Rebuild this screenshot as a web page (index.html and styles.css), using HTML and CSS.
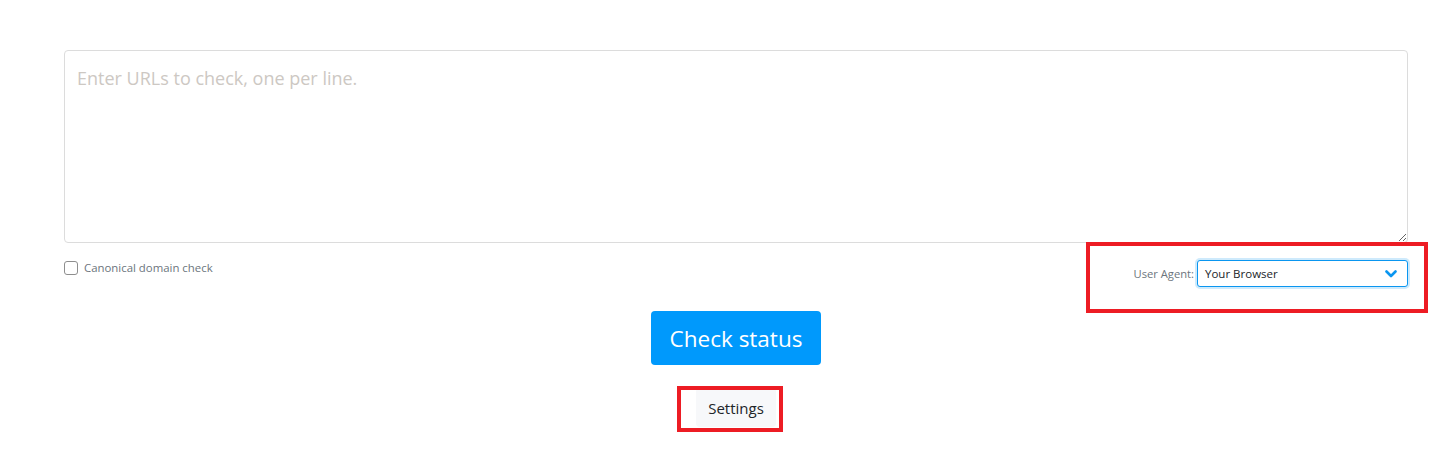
FILE: index.html
```html
<!DOCTYPE html>
<html lang="en">
<head>
<meta charset="utf-8">
<title>Check status</title>
<link rel="stylesheet" href="styles.css">
</head>
<body>
<main class="page">
  <textarea class="urls" placeholder="Enter URLs to check, one per line."></textarea>
  <div class="options">
    <label class="check">
      <input type="checkbox" class="check-box">
      <span class="check-label">Canonical domain check</span>
    </label>
    <div class="ua annotated annotated-ua">
      <span class="ua-label">User Agent:</span>
      <div class="select">
        <span class="select-value">Your Browser</span>
        <svg class="chevron" width="12" height="8" viewBox="0 0 12 8" aria-hidden="true">
          <path d="M1.5 1.5 L6 6 L10.5 1.5" fill="none" stroke="#0a96f0" stroke-width="2.6" stroke-linecap="round" stroke-linejoin="round"/>
        </svg>
      </div>
    </div>
  </div>
  <div class="actions">
    <button class="btn-primary" type="button">Check status</button>
    <span class="annotated annotated-settings">
      <button class="btn-light" type="button">Settings</button>
    </span>
  </div>
</main>
</body>
</html>
```
FILE: styles.css
```css
*, *::before, *::after { box-sizing: border-box; }

html, body {
  margin: 0;
  background: #ffffff;
}

body {
  font-family: "Open Sans", "Noto Sans", "Liberation Sans", sans-serif;
  color: #212529;
}

.page {
  padding: 50px 35px 20px 64px;
  display: flex;
  flex-direction: column;
}

.urls {
  display: block;
  width: 100%;
  height: 193px;
  border: 1px solid #dcdcdc;
  border-radius: 4px;
  padding: 14px 12px;
  font-family: inherit;
  font-size: 18px;
  line-height: 1.45;
  color: #495057;
  resize: vertical;
  outline: none;
  margin: 0;
}

.urls::placeholder {
  color: #cdc8c3;
}

.options {
  display: flex;
  justify-content: space-between;
  align-items: flex-start;
}

.check {
  display: flex;
  align-items: center;
  gap: 6px;
  margin-top: 17px;
  cursor: pointer;
}

.check-box {
  appearance: none;
  -webkit-appearance: none;
  width: 14px;
  height: 14px;
  margin: 0;
  border: 1.5px solid #8e8e8e;
  border-radius: 3px;
  background: #fff;
}

.check-label {
  font-size: 11.4px;
  color: #6c757d;
}

.ua {
  display: flex;
  align-items: center;
  gap: 3px;
  margin-top: 17px;
}

.ua-label {
  font-size: 11.2px;
  color: #6c757d;
}

.select {
  width: 211px;
  height: 27px;
  border: 1px solid #0a96f0;
  border-radius: 3px;
  box-shadow: 0 0 0 2px rgba(10, 150, 240, 0.2);
  display: flex;
  align-items: center;
  justify-content: space-between;
  padding: 0 10px 0 7px;
  background: #fff;
}

.select-value {
  font-size: 11.5px;
  color: #212529;
}

.chevron {
  display: block;
}

.annotated {
  position: relative;
}

.annotated::after {
  content: "";
  position: absolute;
  border: 4px solid #ed1c24;
  pointer-events: none;
}

.annotated-ua::after {
  right: -20px;
  width: 342px;
  top: -18px;
  bottom: -26px;
}

.actions {
  display: flex;
  flex-direction: column;
  align-items: center;
}

.btn-primary {
  margin-top: 24px;
  height: 54px;
  padding: 0 19px;
  border: none;
  border-radius: 4px;
  background: #0099fc;
  color: #ffffff;
  font-family: inherit;
  font-size: 22.5px;
  cursor: pointer;
}

.annotated-settings {
  display: inline-block;
  margin-top: 23px;
}

.annotated-settings::after {
  left: -19px;
  right: -7px;
  top: -2px;
  bottom: -5px;
}

.btn-light {
  display: block;
  height: 39px;
  padding: 0 12px;
  border: none;
  border-radius: 4px;
  background: #f7f8fa;
  color: #212529;
  font-family: inherit;
  font-size: 15px;
  cursor: pointer;
}
```
